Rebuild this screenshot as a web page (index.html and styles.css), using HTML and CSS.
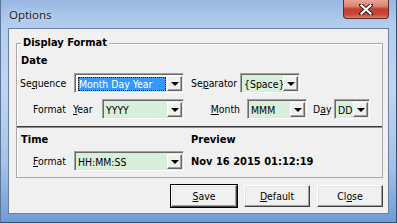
FILE: index.html
```html
<!DOCTYPE html>
<html>
<head>
<meta charset="utf-8">
<link rel="stylesheet" href="styles.css">
</head>
<body>
<div class="window">
  <div class="titlebar">
    <span class="title">Options</span>
    <span class="close-btn">
      <svg width="14" height="11" viewBox="0 0 14 11"><path d="M2 1 L12 10 M12 1 L2 10" stroke="#3a1a18" stroke-width="4" stroke-linecap="square"/><path d="M2.5 1.5 L11.5 9.5 M11.5 1.5 L2.5 9.5" stroke="#fff" stroke-width="2.2" stroke-linecap="square"/></svg>
    </span>
  </div>
  <div class="client">
    <div class="group">
      <span class="legend">Display Format</span>
      <div class="heading">Date</div>
      <div class="row r1">
        <span class="lbl l-seq">Se<u>q</u>uence</span>
        <span class="combo w110 white">
          <span class="val"><span class="sel">Month Day Year</span></span>
          <span class="dd"><i></i></span>
        </span>
        <span class="lbl l-sepr">Se<u>p</u>arator</span>
        <span class="combo w60 green">
          <span class="val">{Space}</span>
          <span class="dd"><i></i></span>
        </span>
      </div>
      <div class="row r2">
        <span class="lbl l-fmt">Format</span>
        <span class="lbl l-year"><u>Y</u>ear</span>
        <span class="combo w82 green">
          <span class="val">YYYY</span>
          <span class="dd"><i></i></span>
        </span>
        <span class="lbl l-month"><u>M</u>onth</span>
        <span class="combo w60 green">
          <span class="val">MMM</span>
          <span class="dd"><i></i></span>
        </span>
        <span class="lbl l-day">D<u>a</u>y</span>
        <span class="combo w36 green">
          <span class="val">DD</span>
          <span class="dd"><i></i></span>
        </span>
      </div>
      <div class="divider"></div>
      <div class="row r3">
        <span class="heading h-time">Time</span>
        <span class="heading h-prev">Preview</span>
      </div>
      <div class="row r4">
        <span class="lbl l-tfmt"><u>F</u>ormat</span>
        <span class="combo w110 green">
          <span class="val">HH:MM:SS</span>
          <span class="dd"><i></i></span>
        </span>
        <span class="preview">Nov 16 2015 01:12:19</span>
      </div>
    </div>
    <div class="buttons">
      <span class="btn default-btn"><u>S</u>ave</span>
      <span class="btn"><u>D</u>efault</span>
      <span class="btn">Cl<u>o</u>se</span>
    </div>
  </div>
</div>
</body>
</html>
```
FILE: styles.css
```css
html, body {
  margin: 0;
  padding: 0;
  background: #fff;
}
.window {
  width: 397px;
  height: 223px;
  box-sizing: border-box;
  padding: 0 7px 0 7px;
  background: linear-gradient(to bottom, #98b8e2 0%, #b3cdee 12%, #c0d6f0 40%, #a3c1e8 75%, #6f9cd6 100%);
  border-left: 1px solid #5d7697;
  border-right: 1px solid #3c4d66;
  border-bottom: 1px solid #3c4d66;
  font-family: "DejaVu Sans Condensed", "DejaVu Sans", sans-serif;
  font-size: 10.4px;
  color: #000;
}
.titlebar {
  height: 28px;
  display: flex;
  align-items: flex-start;
}
.title {
  font-family: "Open Sans", "Noto Sans", sans-serif;
  font-size: 11.5px;
  color: #1b1b1b;
  margin: 7px 0 0 1px;
  text-shadow: 0 0 6px rgba(255,255,255,.9);
}
.close-btn {
  margin-left: auto;
  margin-right: 0;
  width: 46px;
  height: 19px;
  box-sizing: border-box;
  border: 1px solid #5e2b28;
  border-top: none;
  border-radius: 0 0 4px 4px;
  background: linear-gradient(to bottom, #e7a596 0%, #d9836f 35%, #c1402f 50%, #c8473a 80%, #de7d66 100%);
  display: flex;
  align-items: center;
  justify-content: center;
}
.close-btn svg { display: block; }
.client {
  height: 186px;
  box-sizing: border-box;
  border: 1px solid #6a7f9c;
  background: #f0f0f0;
  padding-top: 14px;
}
.group {
  position: relative;
  margin: 0 5px 0 7px;
  border: 1px solid #a9a9a9;
  box-shadow: inset 1px 1px 0 #fff;
  padding: 10px 0 6px 0;
}
.legend {
  position: absolute;
  top: -8px;
  left: 4px;
  padding: 0 2px;
  background: #f0f0f0;
  font-weight: bold;
  font-size: 11px;
  line-height: 14px;
}
.heading {
  font-weight: bold;
  font-size: 11px;
  line-height: 14px;
  padding-left: 4px;
}
.h-prev { padding-left: 0; }
.row {
  display: flex;
  align-items: center;
  height: 20px;
}
.r1 { margin-top: 5px; }
.r2 { margin-top: 6px; }
.r3 { margin-top: 5px; height: 14px; }
.r4 { margin-top: 4px; }
.lbl { white-space: nowrap; }
.l-seq { width: 54px; padding-left: 3px; }
.l-sepr { width: 49px; padding-left: 7px; }
.l-fmt { width: 40px; padding-left: 16px; }
.l-year { width: 29px; }
.l-month { width: 56px; padding-right: 7px; text-align: right; }
.l-day { width: 21px; padding-left: 6px; }
.l-tfmt { width: 41px; padding-left: 16px; }
.h-time { width: 170px; }
.preview {
  font-weight: bold;
  font-size: 11px;
  padding-left: 7px;
}
.combo {
  height: 20px;
  box-sizing: border-box;
  display: flex;
  border-top: 1px solid #a0a0a0;
  border-left: 1px solid #a0a0a0;
  border-right: 1px solid #fff;
  border-bottom: 1px solid #fff;
  box-shadow: inset 1px 1px 0 #696969, inset -1px -1px 0 #e3e3e3;
  padding: 2px 1px 1px 2px;
}
.w110 { width: 110px; }
.w82 { width: 82px; }
.w60 { width: 60px; }
.w36 { width: 36px; }
.green { background: #d8efdb; }
.white { background: #fff; }
.val {
  flex: 1;
  min-width: 0;
  display: flex;
  align-items: center;
  padding-left: 1px;
  white-space: nowrap;
  line-height: 14px;
}
.sel {
  display: block;
  flex: 1;
  background: #3399ff;
  color: #fff;
  outline: 1px dotted #1a1a1a;
  outline-offset: -1px;
  line-height: 14px;
  padding-left: 1px;
  margin-right: 1px;
}
.dd {
  width: 15px;
  flex: none;
  box-sizing: border-box;
  background: #f0f0f0;
  border-top: 1px solid #fff;
  border-left: 1px solid #fff;
  border-right: 1px solid #696969;
  border-bottom: 1px solid #696969;
  box-shadow: inset -1px -1px 0 #a0a0a0;
  display: flex;
  align-items: center;
  justify-content: center;
}
.dd i {
  display: block;
  width: 0;
  height: 0;
  border-left: 4px solid transparent;
  border-right: 4px solid transparent;
  border-top: 4px solid #000;
  margin-top: 1px;
}
.divider {
  margin-top: 7px;
  height: 1px;
  background: #3c3c3c;
  border-bottom: 1px solid #8c8c8c;
}
.buttons {
  display: flex;
  justify-content: flex-end;
  gap: 7px;
  margin-top: 7px;
  padding-right: 5px;
}
.btn {
  width: 66px;
  height: 22px;
  box-sizing: border-box;
  display: flex;
  align-items: center;
  justify-content: center;
  background: #f0f0f0;
  border-top: 1px solid #fff;
  border-left: 1px solid #fff;
  border-right: 1px solid #404040;
  border-bottom: 1px solid #404040;
  box-shadow: inset -1px -1px 0 #a0a0a0, inset 1px 1px 0 #e3e3e3;
}
.default-btn {
  outline: 1px solid #000;
}
```
